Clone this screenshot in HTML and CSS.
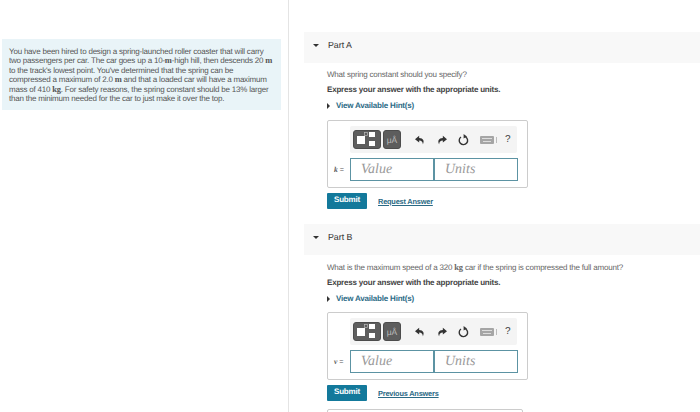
FILE: index.html
```html
<!DOCTYPE html>
<html lang="en">
<head>
    <meta charset="UTF-8">
    <title>Spring-launched roller coaster</title>
    <link rel="stylesheet" href="styles.css">
</head>
<body>
    <div class="page">
        <!-- problem statement -->
        <div class="problem">
            <div class="intro">
                You have been hired to design a spring-launched roller coaster that will carry<br>
                two passengers per car. The car goes up a 10-<span class="unit">m</span>-high hill, then descends 20 <span class="unit">m</span><br>
                to the track's lowest point. You've determined that the spring can be<br>
                compressed a maximum of 2.0 <span class="unit">m</span> and that a loaded car will have a maximum<br>
                mass of 410 <span class="unit">kg</span>. For safety reasons, the spring constant should be 13% larger<br>
                than the minimum needed for the car to just make it over the top.
            </div>
        </div>

        <!-- parts -->
        <div class="parts">
            <div class="part">
                <div class="part-head"><span class="caret"></span>Part A</div>
                <div class="part-body">
                    <p class="question">What spring constant should you specify?</p>
                    <p class="express">Express your answer with the appropriate units.</p>
                    <p class="hints"><span class="hint-caret"></span>View Available Hint(s)</p>
                    <div class="answer-box">
                        <div class="toolbar">
                            <span class="tool tool-wide">
                                <svg width="26" height="18" viewBox="0 0 26 18"><rect x="3" y="5" width="8" height="8" fill="#fff"/><rect x="15" y="1" width="6" height="5" fill="#fff"/><rect x="15" y="10" width="6" height="5" fill="#fff"/><rect x="10.5" y="1.5" width="3" height="3" fill="none" stroke="#bbb" stroke-width=".7"/></svg>
                            </span>
                            <span class="tool tool-units">μÅ</span>
                            <svg class="action act-undo" width="10" height="10" viewBox="0 0 12 10"><path d="M5 0 L0 4 L5 8 V5.5 C8 5.5 9 7 9.5 10 C11.5 6 10 2.8 5 2.6 Z" fill="#333"/></svg>
                            <svg class="action act-redo" width="10" height="10" viewBox="0 0 12 10"><path d="M7 0 L12 4 L7 8 V5.5 C4 5.5 3 7 2.5 10 C.5 6 2 2.8 7 2.6 Z" fill="#333"/></svg>
                            <svg class="action act-reset" width="11" height="12" viewBox="0 0 11 12"><path d="M7.5 2.8 A4.2 4.2 0 1 1 3 3" fill="none" stroke="#333" stroke-width="1.4"/><path d="M5.6 0 L9 2.6 L5.6 4.6 Z" fill="#333"/></svg>
                            <svg class="action act-keys" width="17" height="8" viewBox="0 0 17 8"><rect width="14" height="8" rx="1" fill="#a5a5a5"/><rect x="2" y="2" width="10" height="1" fill="#ddd"/><rect x="3" y="5" width="8" height="1" fill="#ddd"/><rect x="16" y="1" width="1" height="6" fill="#bbb"/></svg>
                            <span class="help">?</span>
                        </div>
                        <div class="inputs">
                            <span class="var"><i>k</i> =</span>
                            <span class="field">Value</span>
                            <span class="field">Units</span>
                        </div>
                    </div>
                    <div class="actions">
                        <span class="submit">Submit</span>
                        <a class="link">Request Answer</a>
                    </div>
                </div>
            </div>

            <div class="part">
                <div class="part-head"><span class="caret"></span>Part B</div>
                <div class="part-body">
                    <p class="question">What is the maximum speed of a 320 <span class="unit">kg</span> car if the spring is compressed the full amount?</p>
                    <p class="express">Express your answer with the appropriate units.</p>
                    <p class="hints"><span class="hint-caret"></span>View Available Hint(s)</p>
                    <div class="answer-box">
                        <div class="toolbar">
                            <span class="tool tool-wide">
                                <svg width="26" height="18" viewBox="0 0 26 18"><rect x="3" y="5" width="8" height="8" fill="#fff"/><rect x="15" y="1" width="6" height="5" fill="#fff"/><rect x="15" y="10" width="6" height="5" fill="#fff"/><rect x="10.5" y="1.5" width="3" height="3" fill="none" stroke="#bbb" stroke-width=".7"/></svg>
                            </span>
                            <span class="tool tool-units">μÅ</span>
                            <svg class="action act-undo" width="10" height="10" viewBox="0 0 12 10"><path d="M5 0 L0 4 L5 8 V5.5 C8 5.5 9 7 9.5 10 C11.5 6 10 2.8 5 2.6 Z" fill="#333"/></svg>
                            <svg class="action act-redo" width="10" height="10" viewBox="0 0 12 10"><path d="M7 0 L12 4 L7 8 V5.5 C4 5.5 3 7 2.5 10 C.5 6 2 2.8 7 2.6 Z" fill="#333"/></svg>
                            <svg class="action act-reset" width="11" height="12" viewBox="0 0 11 12"><path d="M7.5 2.8 A4.2 4.2 0 1 1 3 3" fill="none" stroke="#333" stroke-width="1.4"/><path d="M5.6 0 L9 2.6 L5.6 4.6 Z" fill="#333"/></svg>
                            <svg class="action act-keys" width="17" height="8" viewBox="0 0 17 8"><rect width="14" height="8" rx="1" fill="#a5a5a5"/><rect x="2" y="2" width="10" height="1" fill="#ddd"/><rect x="3" y="5" width="8" height="1" fill="#ddd"/><rect x="16" y="1" width="1" height="6" fill="#bbb"/></svg>
                            <span class="help">?</span>
                        </div>
                        <div class="inputs">
                            <span class="var"><i>v</i> =</span>
                            <span class="field">Value</span>
                            <span class="field">Units</span>
                        </div>
                    </div>
                    <div class="actions">
                        <span class="submit">Submit</span>
                        <a class="link">Previous Answers</a>
                    </div>
                    <div class="next-box"></div>
                </div>
            </div>
        </div>
    </div>
</body>
</html>
```

FILE: styles.css
```css
html, body {
    margin: 0;
    height: 412px;
    overflow: hidden;
    background: #fff;
}
body {
    font-family: 'Liberation Sans', Arial, sans-serif;
    color: #444;
    text-rendering: geometricPrecision;
}
.page {
    display: flex;
    height: 412px;
}
.problem {
    width: 288px;
    flex: none;
    border-right: 1px solid #e4e4e4;
    padding-top: 39px;
}
.intro {
    width: 272px;
    height: 63px;
    margin-left: 2px;
    padding: 8px 0 0 7px;
    background-color: #e9f4f8;
    font-size: 8px;
    letter-spacing: -0.21px;
    line-height: 9.4px;
    color: #555;
    white-space: nowrap;
}
.unit {
    font-family: 'Liberation Serif', serif;
    font-weight: bold;
    font-size: 8.5px;
}
.parts {
    flex: 1;
    padding: 32px 0 0 15px;
}
.part {
    height: 192px;
}
.part-head {
    display: flex;
    align-items: center;
    height: 31px;
    padding-bottom: 5px;
    box-sizing: border-box;
    background-color: #f8f8f8;
    font-size: 8.8px;
    color: #333;
}
.caret {
    width: 0;
    height: 0;
    margin: 0 9px 0 9px;
    border-left: 3px solid transparent;
    border-right: 3px solid transparent;
    border-top: 3px solid #333;
}
.part-body {
    padding: 7px 0 0 23px;
}
.question {
    margin: 0;
    font-size: 8px;
    letter-spacing: -0.2px;
    line-height: 10px;
    color: #666;
    white-space: nowrap;
}
.express {
    margin: 5px 0 0;
    font-size: 8px;
    letter-spacing: -0.2px;
    line-height: 10px;
    font-weight: bold;
    color: #444;
}
.hints {
    display: flex;
    align-items: center;
    margin: 6px 0 0;
    font-size: 8px;
    letter-spacing: -0.2px;
    line-height: 10px;
    color: #2b6a85;
    font-weight: bold;
}
.hint-caret {
    width: 0;
    height: 0;
    margin-right: 6px;
    border-top: 3px solid transparent;
    border-bottom: 3px solid transparent;
    border-left: 3px solid #333;
}
.answer-box {
    width: 201px;
    height: 68px;
    margin-top: 9px;
    padding: 5px 9px 0 22px;
    box-sizing: border-box;
    border: 1px solid #ccc;
    border-radius: 2px;
}
.part + .part .answer-box {
    margin-top: 8px;
}
.toolbar {
    display: flex;
    align-items: center;
    width: 167px;
    height: 27px;
    padding-left: 3px;
    box-sizing: border-box;
    background-color: #f4f4f4;
    border-radius: 2px;
}
.tool {
    display: flex;
    align-items: center;
    justify-content: center;
    flex: none;
    height: 19px;
    border-radius: 3px;
    background-color: #5d5d5d;
    border: 1px solid #4c4c4c;
    box-sizing: border-box;
}
.tool-wide {
    width: 28px;
}
.tool-units {
    width: 18px;
    margin-left: 2px;
    color: #bbb;
    font-size: 8.5px;
}
.action {
    flex: none;
}
.act-undo {
    margin-left: 14px;
}
.act-redo {
    margin-left: 12px;
}
.act-reset {
    margin-left: 11px;
}
.act-keys {
    margin-left: 11px;
}
.help {
    margin-left: 8px;
    font-size: 10px;
    color: #444;
}
.inputs {
    display: flex;
    align-items: center;
    margin-top: 5px;
    margin-left: -16px;
}
.var {
    width: 16px;
    flex: none;
    font-family: 'Liberation Serif', serif;
    font-size: 7.5px;
    color: #555;
}
.var i {
    font-weight: bold;
}
.field {
    flex: none;
    width: 84px;
    height: 23px;
    padding-left: 10px;
    box-sizing: border-box;
    border: 1px solid #5c93a3;
    font-family: 'Liberation Serif', serif;
    font-style: italic;
    font-size: 14px;
    line-height: 21px;
    color: #999;
}
.actions {
    display: flex;
    align-items: center;
    margin-top: 5px;
}
.submit {
    width: 40px;
    height: 16px;
    background-color: #13799b;
    color: #fff;
    font-size: 8px;
    letter-spacing: -0.2px;
    font-weight: bold;
    line-height: 14px;
    text-align: center;
    border-radius: 1px;
}
.link {
    margin-left: 11px;
    font-size: 7.4px;
    letter-spacing: -0.2px;
    font-weight: bold;
    color: #2b6a85;
    text-decoration: underline;
}
.next-box {
    width: 194px;
    height: 10px;
    margin-top: 8px;
    border: 1px solid #ccc;
    border-radius: 2px;
}
```
